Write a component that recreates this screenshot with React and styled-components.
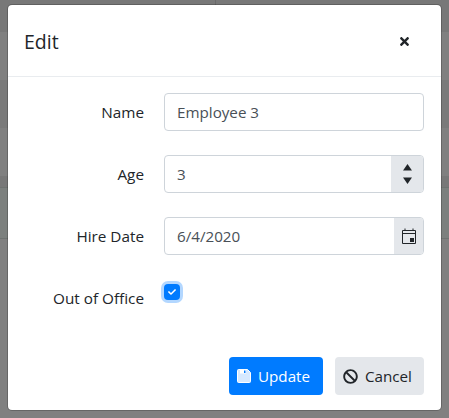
import React from "react";
import styled, { createGlobalStyle } from "styled-components";
import { FaBan, FaTimes, FaCheck } from "react-icons/fa";

const Global = createGlobalStyle`
  html, body { margin: 0; padding: 0; height: 100%; background: #808080; }
  body { font-family: "Open Sans", "Noto Sans", sans-serif; overflow: hidden; }
  #root { height: 100%; }
`;

const Page = styled.div`
  position: relative;
  width: 449px;
  height: 418px;
  overflow: hidden;
  background: #808080;
`;
const Band = styled.div`
  height: ${(p) => p.$h}px;
  background: ${(p) => p.$bg};
  border-bottom: ${(p) => (p.$line ? "1px solid #6f7371" : "none")};
  box-sizing: border-box;
`;
const TopBand = styled(Band)`
  display: flex;
`;
const BackCell = styled.div`
  margin-left: 215px;
  border-left: 1px solid #6a6a6a;
  padding: 0 0 0 15px;
  font-size: 14px;
  line-height: 20px;
  color: #3a3a3a;
  white-space: nowrap;
`;
const Modal = styled.div`
  position: absolute;
  left: 7px;
  top: 4px;
  width: 435px;
  height: 407px;
  box-sizing: border-box;
  background: #fff;
  border: 1px solid rgba(0, 0, 0, 0.2);
  border-radius: 5px;
  background-clip: padding-box;
  display: flex;
  flex-direction: column;
`;
const Header = styled.div`
  height: 72px;
  box-sizing: border-box;
  border-bottom: 1px solid #e9ecef;
  display: flex;
  align-items: center;
  justify-content: space-between;
  padding: 0 30px 0 16px;
`;
const Title = styled.div`
  font-size: 19.5px;
  color: #212529;
  margin-top: 1px;
`;
const Close = styled.button`
  border: 0;
  background: none;
  padding: 0;
  display: flex;
  color: #212529;
  font-size: 13px;
  margin-top: 1px;
`;
const Body = styled.div`
  flex: 1;
  padding: 16px 17px 0 0;
  display: flex;
  flex-direction: column;
  gap: 24px;
`;
const Row = styled.div`
  display: grid;
  grid-template-columns: 136px 1fr;
  column-gap: 20px;
  align-items: center;
  height: 38px;
`;
const Label = styled.label`
  text-align: right;
  font-size: 15.3px;
  color: #212529;
  white-space: nowrap;
`;
const Field = styled.div`
  height: 38px;
  box-sizing: border-box;
  border: 1px solid #ced4da;
  border-radius: 4px;
  display: flex;
  align-items: stretch;
  overflow: hidden;
  background: #fff;
`;
const Value = styled.div`
  flex: 1;
  padding-left: 12px;
  font-size: 15.2px;
  line-height: 36px;
  color: #495057;
`;
const Addon = styled.div`
  width: ${(p) => p.$w}px;
  background: #e4e7eb;
  display: flex;
  flex-direction: column;
  align-items: center;
  justify-content: center;
  color: #212529;
`;
const CheckOuter = styled.div`
  width: 16px;
  height: 16px;
  margin-bottom: 12px;
  border-radius: 4px;
  background: #007bff;
  box-shadow: 0 0 0 3px #b3d7ff;
  display: flex;
  align-items: center;
  justify-content: center;
  color: #fff;
  font-size: 8px;
`;
const Footer = styled.div`
  height: 53px;
  display: flex;
  justify-content: flex-end;
  align-items: flex-start;
  gap: 12px;
  padding: 0 17px 0 0;
`;
const Button = styled.button`
  height: 38px;
  width: ${(p) => p.$w}px;
  box-sizing: border-box;
  border: 0;
  border-radius: 4px;
  padding: 0 0 0 8px;
  display: flex;
  align-items: center;
  gap: 7px;
  font-family: inherit;
  font-size: 15.2px;
  background: ${(p) => (p.$primary ? "#007bff" : "#e4e7eb")};
  color: ${(p) => (p.$primary ? "#fff" : "#212529")};
  svg { flex: none; }
`;

const Spinner = () => (
  <svg width="11" height="22" viewBox="0 0 11 22" fill="currentColor">
    <path d="M5.5 1 L10 7.5 H1 Z" />
    <path d="M1 14.5 H10 L5.5 21 Z" />
  </svg>
);
const Calendar = () => (
  <svg width="14" height="16" viewBox="0 0 14 16" fill="none">
    <path d="M0.5 2.5 H13.5 V15.5 H0.5 Z M0.5 5.5 H13.5" stroke="#212529" />
    <path d="M3 0.5 V3 M11 0.5 V3" stroke="#212529" />
    <rect x="8" y="10" width="4" height="4" fill="#212529" />
  </svg>
);
const SaveIcon = () => (
  <svg width="14" height="14" viewBox="0 0 14 14" fill="none">
    <path d="M0.5 1.5 a1 1 0 0 1 1-1 H10.5 L13.5 3.5 V12.5 a1 1 0 0 1 -1 1 H1.5 a1 1 0 0 1 -1-1 Z" fill="#d6e9ff" stroke="#fff" />
    <rect x="3" y="1" width="6" height="3.5" fill="#fff" />
    <rect x="7" y="1.5" width="1.5" height="2.5" fill="#007bff" />
  </svg>
);

export default function App() {
  return (
    <Page>
      <Global />
      <TopBand $h={32} $bg="#787878">
        <BackCell>6/4/2020 12:00:00 AM</BackCell>
      </TopBand>
      <Band $h={48} $bg="#808080" />
      <Band $h={48} $bg="#7a7a7a" />
      <Band $h={48} $bg="#808080" />
      <Band $h={12} $bg="#787878" $line />
      <Band $h={51} $bg="#7c807e" $line />
      <Modal>
        <Header>
          <Title>Edit</Title>
          <Close aria-label="Close"><FaTimes /></Close>
        </Header>
        <Body>
          <Row>
            <Label>Name</Label>
            <Field><Value>Employee 3</Value></Field>
          </Row>
          <Row>
            <Label>Age</Label>
            <Field>
              <Value>3</Value>
              <Addon $w={32}><Spinner /></Addon>
            </Field>
          </Row>
          <Row>
            <Label>Hire Date</Label>
            <Field>
              <Value>6/4/2020</Value>
              <Addon $w={29}><Calendar /></Addon>
            </Field>
          </Row>
          <Row>
            <Label>Out of Office</Label>
            <CheckOuter><FaCheck /></CheckOuter>
          </Row>
        </Body>
        <Footer>
          <Button $primary $w={94}><SaveIcon />Update</Button>
          <Button $w={89}><FaBan size={15} />Cancel</Button>
        </Footer>
      </Modal>
    </Page>
  );
}
